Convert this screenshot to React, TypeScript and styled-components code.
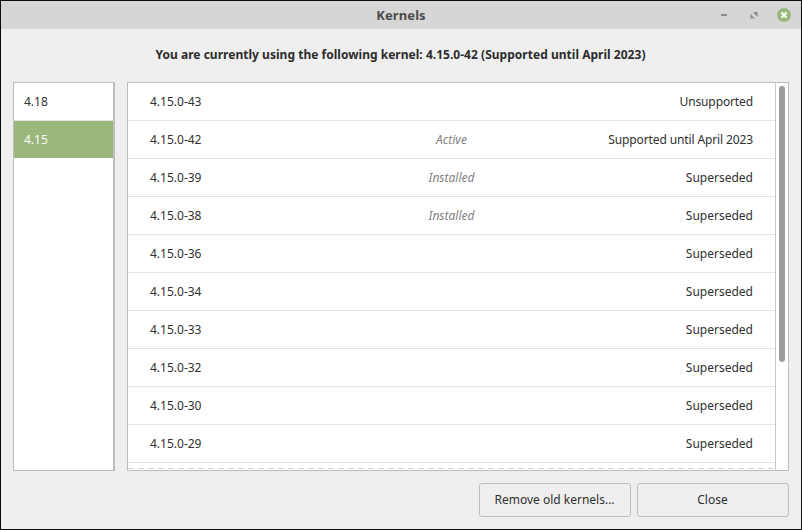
import styled, { createGlobalStyle } from "styled-components";

const GlobalStyle = createGlobalStyle`
  html, body {
    margin: 0;
    padding: 0;
    background: #000;
  }
  * {
    box-sizing: border-box;
  }
`;

const Window = styled.div`
  width: 802px;
  height: 530px;
  border: 1px solid #0c0c0c;
  background: #efefef;
  display: flex;
  flex-direction: column;
  font-family: "Noto Sans", sans-serif;
  font-size: 12px;
  color: #303030;
  overflow: hidden;
`;

const TitleBar = styled.div`
  height: 28px;
  flex: none;
  background: #d6d6d6;
  display: grid;
  grid-template-columns: 1fr auto 1fr;
  align-items: center;
`;

const Title = styled.div`
  grid-column: 2;
  font-weight: 700;
  font-size: 13px;
  color: #4a4a4a;
  letter-spacing: 0.1px;
`;

const WindowButtons = styled.div`
  grid-column: 3;
  justify-self: end;
  display: flex;
  align-items: center;
  gap: 16px;
  padding-right: 10px;
`;

const Heading = styled.div`
  flex: none;
  height: 53px;
  padding-top: 17px;
  text-align: center;
  font-weight: 700;
  line-height: 17px;
  letter-spacing: 0.025px;
  color: #2c2c2c;
  padding-right: 1px;
`;

const Content = styled.div`
  flex: none;
  height: 389px;
  padding: 0 12px;
  display: flex;
  gap: 12px;
`;

const SidePanel = styled.div`
  width: 102px;
  background: #fff;
  border: 1px solid #bdbdbd;
  border-right-width: 2px;
`;

const SideItem = styled.div<{ $selected?: boolean }>`
  height: ${(p) => (p.$selected ? "37px" : "38px")};
  padding-left: 10px;
  line-height: 37px;
  background: ${(p) => (p.$selected ? "#9ab87c" : "#fff")};
  color: ${(p) => (p.$selected ? "#fff" : "#303030")};
  border-bottom: ${(p) => (p.$selected ? "none" : "1px solid #e3e3e3")};
`;

const ListPanel = styled.div`
  flex: 1;
  background: #fff;
  border: 1px solid #bdbdbd;
  display: flex;
  overflow: hidden;
`;

const Rows = styled.div`
  flex: 1;
  overflow: hidden;
  position: relative;
`;

const Row = styled.div`
  height: 38px;
  border-bottom: 1px solid #e3e3e3;
  padding: 0 22px;
  display: grid;
  grid-template-columns: 1fr 1fr 1fr;
  align-items: center;
`;

const Version = styled.span``;

const State = styled.span`
  font-style: italic;
  color: #7f7f7f;
  text-align: center;
`;

const Support = styled.span<{ $tight?: boolean }>`
  text-align: right;
  white-space: nowrap;
  letter-spacing: ${(p) => (p.$tight ? "-0.12px" : "0")};
`;

const DashedEdge = styled.div`
  position: absolute;
  left: 0;
  right: 2px;
  bottom: 1px;
  height: 1px;
  background: repeating-linear-gradient(to right, #cfcfcf 0 6px, #fff 6px 10px);
`;

const Gutter = styled.div`
  width: 13px;
  flex: none;
  border-left: 1px solid #c8c8c8;
  padding: 3px 0 0 3px;
`;

const Thumb = styled.div`
  width: 6px;
  height: 276px;
  border-radius: 3px;
  background: #9d9d9d;
`;

const Footer = styled.div`
  flex: none;
  padding: 12px 12px 0 0;
  display: flex;
  justify-content: flex-end;
  gap: 6px;
`;

const Button = styled.button`
  width: 152px;
  height: 34px;
  background: #efefef;
  border: 1px solid #bdbdbd;
  border-radius: 3px;
  font-family: inherit;
  font-size: 12px;
  color: #303030;
  padding: 0 1px 1px 0;
`;

const kernels = [
  { version: "4.15.0-43", state: "", support: "Unsupported" },
  { version: "4.15.0-42", state: "Active", support: "Supported until April 2023" },
  { version: "4.15.0-39", state: "Installed", support: "Superseded" },
  { version: "4.15.0-38", state: "Installed", support: "Superseded" },
  { version: "4.15.0-36", state: "", support: "Superseded" },
  { version: "4.15.0-34", state: "", support: "Superseded" },
  { version: "4.15.0-33", state: "", support: "Superseded" },
  { version: "4.15.0-32", state: "", support: "Superseded" },
  { version: "4.15.0-30", state: "", support: "Superseded" },
  { version: "4.15.0-29", state: "", support: "Superseded" },
];

export default function App() {
  return (
    <Window>
      <GlobalStyle />
      <TitleBar>
        <Title>Kernels</Title>
        <WindowButtons>
          <svg width="14" height="14" viewBox="0 0 14 14">
            <rect x="4" y="6" width="6" height="2" fill="#8e8e8e" />
          </svg>
          <svg width="14" height="14" viewBox="0 0 14 14">
            <path d="M6 4h4.5v5zM3.5 6l4.5 4.5H3.5z" fill="#8a8a8a" />
          </svg>
          <svg width="14" height="14" viewBox="0 0 14 14">
            <circle cx="7" cy="7" r="7" fill="#9ab87c" />
            <path d="M4.5 4.5l5 5M9.5 4.5l-5 5" stroke="#fff" strokeWidth="2" />
          </svg>
        </WindowButtons>
      </TitleBar>
      <Heading>You are currently using the following kernel: 4.15.0-42 (Supported until April 2023)</Heading>
      <Content>
        <SidePanel>
          <SideItem>4.18</SideItem>
          <SideItem $selected>4.15</SideItem>
        </SidePanel>
        <ListPanel>
          <Rows>
            {kernels.map((k) => (
              <Row key={k.version}>
                <Version>{k.version}</Version>
                <State>{k.state}</State>
                <Support $tight={k.support !== "Superseded"}>{k.support}</Support>
              </Row>
            ))}
            <DashedEdge />
          </Rows>
          <Gutter>
            <Thumb />
          </Gutter>
        </ListPanel>
      </Content>
      <Footer>
        <Button>Remove old kernels...</Button>
        <Button>Close</Button>
      </Footer>
    </Window>
  );
}
